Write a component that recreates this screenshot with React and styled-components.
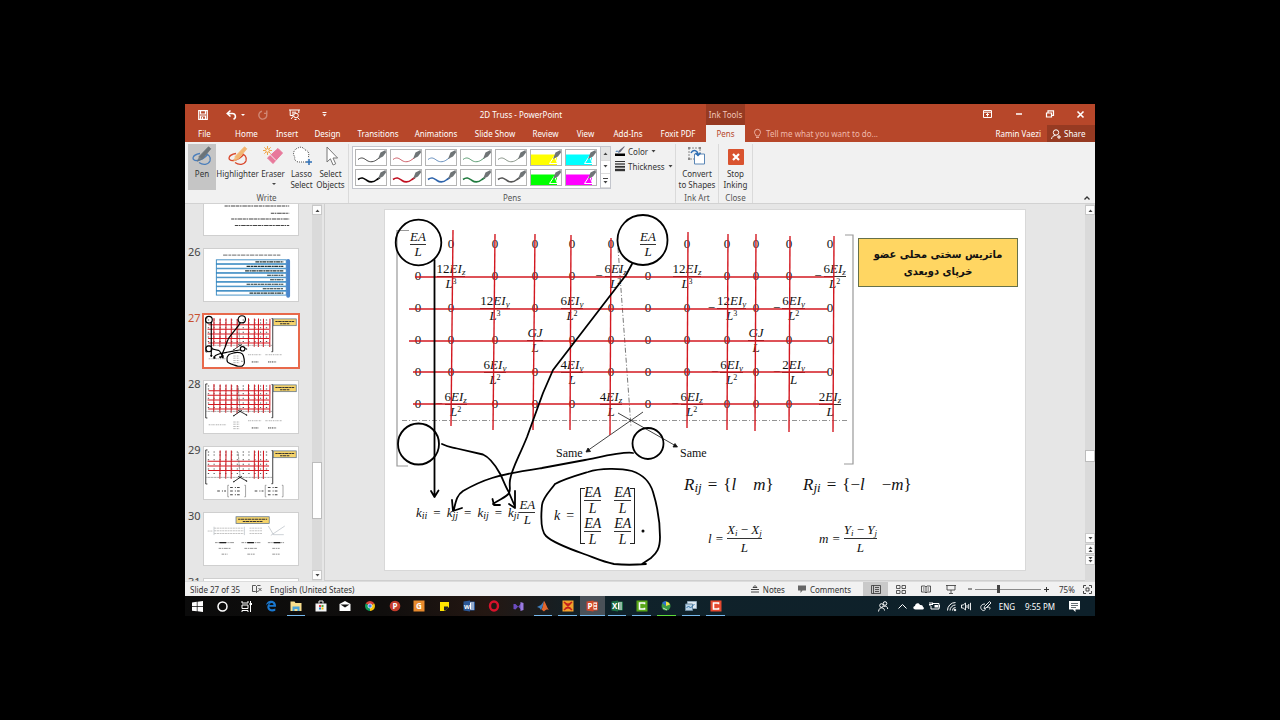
import React from 'react';
import styled, { createGlobalStyle } from 'styled-components';

const GlobalStyle = createGlobalStyle`
    * {
        box-sizing: border-box;
    }

    body {
        margin: 0;
        background: #000;
        font-family: "Noto Sans", "Open Sans", sans-serif;
        font-size: 8px;
        color: #333;
    }

    button {
        border: 0;
        padding: 0;
        background: none;
        font: inherit;
        color: inherit;
    }

    svg {
        display: block;
        flex: none;
        overflow: visible;
    }
`;

const Page = styled.div`
    min-height: 100vh;
    padding: 104px 185px;
`;

const Window = styled.div`
    display: flex;
    flex-direction: column;
    background: #e6e6e6;
`;

/* Title bar and tabs */

const TitleBar = styled.header`
    display: flex;
    height: 21px;
    background: #b7472a;
    color: #fff;
`;

const QuickAccess = styled.div`
    display: flex;
    align-items: center;
    flex: 0 0 151px;
    padding-left: 8px;
`;

const QuickButton = styled.button`
    display: flex;
    align-items: center;
    justify-content: center;
    width: ${props => props.$width}px;
    height: 20px;
    opacity: ${props => props.$faded ? 0.35 : 1};
`;

const Title = styled.h1`
    flex: 0 0 370px;
    margin: 0;
    font-size: 8px;
    font-weight: 400;
    line-height: 22px;
    text-align: center;
`;

const ContextTitle = styled.div`
    flex: 0 0 39px;
    background: #963a22;
    color: #f3c5b8;
    line-height: 22px;
    text-align: center;
    white-space: nowrap;
`;

const WindowButtons = styled.div`
    display: flex;
    margin-left: auto;
`;

const TabBar = styled.nav`
    display: flex;
    height: 17px;
    background: #b7472a;
    color: #fff;
`;

const Tab = styled.button`
    width: ${props => props.$width}px;
    height: 17px;
    margin-left: ${props => props.$active ? 2 : 0}px;
    background: ${props => props.$active ? '#f1f1f1' : 'none'};
    color: ${props => props.$active ? '#b7472a' : 'inherit'};
    white-space: nowrap;
`;

const TellMe = styled.button`
    display: flex;
    align-items: center;
    gap: 5px;
    margin-left: 9px;
    color: #f0b9aa;
`;

const UserName = styled.span`
    margin-left: auto;
    margin-right: 6px;
    line-height: 17px;
`;

const ShareButton = styled.button`
    display: flex;
    align-items: center;
    gap: 3px;
    width: 48px;
    padding-left: 4px;
    background: #963a22;
    color: #fff;
`;

/* Ribbon */

const Ribbon = styled.section`
    display: flex;
    height: 62px;
    background: #f1f1f1;
    border-bottom: 1px solid #d2d2d2;
`;

const Group = styled.div`
    display: flex;
    flex-direction: column;
    justify-content: space-between;
    width: ${props => props.$width}px;
    margin: 2px 0 0;
    border-right: 1px solid #dadada;
`;

const GroupBody = styled.div`
    display: flex;
    padding-left: ${props => props.$inset}px;
`;

const GroupName = styled.div`
    line-height: 10px;
    text-align: center;
    color: #555;
`;

const ToolButton = styled.button`
    display: flex;
    flex-direction: column;
    align-items: center;
    width: ${props => props.$width}px;
    height: 46px;
    padding-top: 2px;
    background: ${props => props.$active ? '#c5c5c5' : 'none'};
    line-height: 11px;
    white-space: nowrap;
`;

const ToolLabel = styled.span`
    margin-top: 2px;
`;

const Gallery = styled.div`
    display: flex;
    height: 43px;
    margin-top: 2px;
    background: #fff;
    border: 1px solid #c3c5cc;
`;

const Swatches = styled.div`
    display: grid;
    grid-template-columns: repeat(7, 32px);
    gap: 3px;
    padding: 2px;
`;

const Swatch = styled.button`
    height: 17px;
    border: 1px solid #b4b4b4;
    background: #fff;
`;

const GalleryScroll = styled.div`
    display: grid;
    grid-template-rows: repeat(3, 1fr);
    width: 10px;
    margin-left: 1px;
    border-left: 1px solid #c3c5cc;
`;

const GalleryArrow = styled.button`
    display: flex;
    align-items: center;
    justify-content: center;
    border-bottom: 1px solid #dcdcdc;
    background: ${props => props.$dim ? '#e4e4e4' : '#fff'};
`;

const InkOptions = styled.div`
    display: flex;
    flex-direction: column;
    gap: 1px;
    padding-left: 4px;
`;

const OptionButton = styled.button`
    display: flex;
    align-items: center;
    gap: 3px;
    height: 14px;
    white-space: nowrap;
`;

const Collapse = styled.button`
    align-self: flex-end;
    margin: 0 5px 3px auto;
`;

/* Work area */

const Workspace = styled.main`
    display: flex;
    height: 377px;
`;

const Sidebar = styled.aside`
    display: flex;
    flex: 0 0 140px;
    border-right: 1px solid #cfcfcf;
    overflow: hidden;
`;

const ThumbList = styled.ol`
    flex: 1;
    display: flex;
    flex-direction: column;
    gap: 12px;
    margin: -22px 0 0;
    padding: 0;
    list-style: none;
`;

const ThumbItem = styled.li`
    display: flex;
    flex: none;
    gap: ${props => props.$selected ? 1 : 2}px;
    height: 54px;
    padding-left: 3px;
    color: ${props => props.$selected ? '#c8502f' : '#444'};
    font-size: 11px;
    line-height: 8px;
`;

const ThumbNumber = styled.span`
    width: 13px;
`;

const ThumbFrame = styled.button`
    width: ${props => props.$selected ? 98 : 96}px;
    height: ${props => props.$selected ? 56 : 54}px;
    margin-top: ${props => props.$selected ? -1 : 0}px;
    border: ${props => props.$selected ? '2px solid #e8694b' : '1px solid #cfcfcf'};
    background: #fff;

    svg {
        width: 100%;
        height: 100%;
        overflow: hidden;
    }
`;

const ScrollTrack = styled.div`
    display: flex;
    flex-direction: column;
    width: 10px;
    margin-right: ${props => props.$gap || 0}px;
    padding: 1px 0;
    background: #dadada;
`;

const ScrollButton = styled.button`
    display: flex;
    align-items: center;
    justify-content: center;
    height: 10px;
    margin-bottom: ${props => props.$space || 0}px;
    background: #fdfdfd;
    border: 1px solid #c8c8c8;
`;

const ScrollGap = styled.div`
    flex: ${props => props.$grow};
`;

const ScrollThumb = styled.div`
    height: ${props => props.$size}px;
    background: #fff;
    border: 1px solid #bcbcbc;
`;

const CanvasArea = styled.div`
    display: flex;
    flex: 1;
    justify-content: center;
    padding-top: 6px;
    border-bottom: 1px solid #cfcfcf;
`;

/* The slide is a free canvas, its parts are placed by coordinates */

const Slide = styled.article`
    position: relative;
    width: 640px;
    height: 360px;
    background: #fff;
    box-shadow: 0 0 0 1px #d8d8d8;
    color: #111;
    font-family: "Liberation Serif", serif;
    font-size: 12px;
    line-height: 14px;
`;

const Placed = styled.div`
    position: absolute;
    left: ${props => props.$x}px;
    top: ${props => props.$y}px;
    display: flex;
    align-items: center;
    font-size: ${props => props.$size || 12}px;
    line-height: ${props => props.$leading || 14}px;
    white-space: pre;
`;

const Ink = styled.svg`
    position: absolute;
    left: 0;
    top: 0;
    width: 640px;
    height: 360px;
`;

const Callout = styled.div`
    position: absolute;
    left: 473px;
    top: 28px;
    width: 160px;
    height: 49px;
    padding: 7px 12px;
    background: #ffd662;
    border: 1px solid #66714a;
    color: #111;
    font-family: "DejaVu Sans Condensed", "DejaVu Sans", sans-serif;
    font-size: 11px;
    font-weight: 700;
    line-height: 17px;
    text-align: center;
    white-space: nowrap;
`;

const Matrix = styled.div`
    position: absolute;
    left: 16px;
    top: 18px;
    display: grid;
    grid-template-columns: 34px 32px 56px 24px 50px 28px 46px 32px 48px 10px 56px 26px;
    grid-auto-rows: 32px;
    font-size: 13px;
`;

const Cell = styled.div`
    display: flex;
    align-items: center;
    justify-content: center;
    white-space: nowrap;
`;

const FracBox = styled.span`
    display: inline-flex;
    flex-direction: column;
    text-align: center;
`;

const Over = styled.span`
    border-bottom: 1px solid #333;
`;

const Minus = styled.span`
    margin-right: 2px;
`;

const Equals = styled.span`
    margin: 0 ${props => props.$space || 6}px;
`;

const Sub = styled.sub`
    font-size: ${props => props.$size || 9}px;
    line-height: 0;
    vertical-align: -2px;
`;

const Sup = styled.sup`
    font-size: 8px;
    line-height: 0;
    vertical-align: 4px;
`;

const Bracketed = styled.div`
    display: grid;
    grid-template-columns: 17px 17px;
    column-gap: 13px;
    padding: 0 4px;
    line-height: 15px;
    position: relative;

    &::before,
    &::after {
        content: '';
        position: absolute;
        top: 3px;
        bottom: 3px;
        width: 4px;
        border: 1px solid #222;
    }

    &::before {
        left: 0;
        border-right: 0;
    }

    &::after {
        right: 0;
        border-left: 0;
    }
`;

/* Status bar */

const StatusBar = styled.footer`
    display: flex;
    align-items: center;
    height: 15px;
    padding-left: 5px;
    background: #f1f1f1;
    border-top: 1px solid #dcdcdc;
`;

const StatusItem = styled.button`
    display: flex;
    align-items: center;
    gap: 4px;
    margin-right: ${props => props.$space}px;
    white-space: nowrap;
`;

const StatusRight = styled.div`
    display: flex;
    align-items: center;
    margin-left: auto;
`;

const ViewButton = styled.button`
    display: flex;
    align-items: center;
    justify-content: center;
    width: ${props => props.$width || 25}px;
    height: 14px;
    background: ${props => props.$active ? '#c9c9c9' : 'none'};
`;

const Zoom = styled.div`
    display: flex;
    align-items: center;
    margin-left: 5px;
`;

const ZoomRange = styled.input`
    appearance: none;
    width: 66px;
    height: 9px;
    margin: 0 3px;
    background: linear-gradient(#8a8a8a, #8a8a8a) center / 100% 1px no-repeat;

    &::-webkit-slider-thumb {
        appearance: none;
        width: 3px;
        height: 8px;
        background: #444;
    }
`;

const ZoomValue = styled.span`
    width: 30px;
    padding-left: 10px;
`;

/* Taskbar */

const Taskbar = styled.nav`
    display: flex;
    height: 20px;
    background: linear-gradient(to right, #0b0b0b 0%, #100e0d 22%, #241712 33%, #10222a 45%, #0d202a 100%);
    color: #fff;
`;

const Apps = styled.div`
    display: grid;
    grid-template-columns: repeat(22, 1fr);
    flex: 0 0 543px;
`;

const AppButton = styled.button`
    display: flex;
    align-items: center;
    justify-content: center;
    margin: 0 ${props => props.$active ? 0 : 3}px;
    border-top: 1px solid transparent;
    border-bottom: 1px solid ${props => props.$line || 'transparent'};
    background: ${props => props.$active ? '#4a5158' : 'none'};
`;

const Tray = styled.div`
    display: flex;
    align-items: center;
    margin-left: auto;
    padding-right: 9px;
`;

const TrayButton = styled.button`
    display: flex;
    justify-content: center;
    width: ${props => props.$width}px;
    white-space: nowrap;
`;

const Svg = ({ w = 12, h = w, children }) => (
    <svg width={w} height={h} viewBox={`0 0 ${w} ${h}`} fill="none" stroke="currentColor" aria-hidden="true">
        {children}
    </svg>
);

const Arrow = ({ up, double }) => (
    <Svg w={5} h={double ? 6 : 3}>
        <g fill="#444" stroke="none" transform={up ? `rotate(180 2.5 ${double ? 3 : 1.5})` : undefined}>
            <path d="M0.5 0h4L2.5 2.5z" />
            {double && <path d="M0.5 3h4L2.5 5.5z" />}
        </g>
    </Svg>
);

const quickItems = [
    ['Save', 20, <Svg w={10}><path d="M0.7 0.7h8.6v8.6H0.7zM2.5 1v3h5V1M2.5 9V6h5v3M4.5 7v2" strokeWidth="1.2" /></Svg>],
    ['Undo', 44, <>
        <Svg w={11} h={10}><path d="M4.5 0.5L1.2 3.5l3.3 3M1.5 3.5h5a3 3 0 0 1 1 5.8" strokeWidth="1.5" /></Svg>
        <Svg w={8} h={2}><path d="M4 0h4L6 2z" fill="#fff" stroke="none" /></Svg>
    </>],
    ['Redo', 12, <Svg w={10}><path d="M8.2 3A4 4 0 1 1 4 1.2M8.8 0.4v3H6" strokeWidth="1.4" /></Svg>],
    ['Start slide show', 50, <Svg w={11}><path d="M0 1h11M1.2 1v5.5h3M9.8 1v3M3 3.2h4M3 5h2M2 10l2.5-3M7.5 10.5H5.5" /><circle cx="7" cy="6.5" r="2.3" /><path d="M8.5 8.5l2 2" /></Svg>],
    ['Customize', 10, <Svg w={5} h={5}><path d="M0.5 0.5h4" /><path d="M0.5 2.3h4L2.5 4.5z" fill="#fff" stroke="none" /></Svg>],
];

const tabs = [
    ['File', 39], ['Home', 45], ['Insert', 36], ['Design', 45], ['Transitions', 56], ['Animations', 60], ['Slide Show', 58],
    ['Review', 43], ['View', 37], ['Add-Ins', 48], ['Foxit PDF', 52],
];

const PenIcon = ({ ink, body }) => (
    <Svg w={20}>
        <path d="M8 7.5C-1 9 -0.5 15 5 14.5c5-.5 9-4 11-6.5M7 16.5c4 3 9 2.5 11-1.5 1.5-4-2-7-5-7.5" stroke={ink} strokeWidth="1.3" />
        <path d="M16.5 0.8l2.3 2-8.6 10.5-3.3-2.6z" fill={body} stroke={body} strokeLinejoin="round" strokeWidth="0.8" />
        <path d="M6.9 10.7l3.3 2.6-5.2 2.6z" fill={body} stroke="none" opacity="0.85" />
    </Svg>
);

const tools = [
    ['Pen', '', 28, <PenIcon ink="#4a7ebb" body="#6b7378" />, true],
    ['Highlighter', '', 43, <PenIcon ink="#d9472b" body="#f2b672" />],
    ['Eraser', '', 28, <Svg w={20}>
        <path d="M15 2.5l4.5 4.5L10 17.5 4.5 12z" fill="#e8799b" stroke="#e8799b" strokeLinejoin="round" />
        <path d="M7.5 9l5.5 5.5" stroke="#f1f1f1" />
        <path d="M4.5 0v9M0 4.5h9M1.3 1.3l6.4 6.4M7.7 1.3L1.3 7.7" stroke="#f0a74d" />
        <circle cx="4.5" cy="4.5" r="1.8" fill="#fff6e6" stroke="#f0a74d" />
    </Svg>],
    ['Lasso', 'Select', 29, <Svg w={20}>
        <path d="M14 16H6c-3-1-4-3-3-5C0 8 2 3 6 2c3-2 6 0 7 2 3 0 5 4 3 8" fill="#fff" stroke="#555" strokeDasharray="1 1" />
        <path d="M17 13v6M14 16h6" stroke="#2f6fb5" strokeWidth="1.5" />
    </Svg>],
    ['Select', 'Objects', 29, <Svg w={20}>
        <path d="M6 1v15l3.4-3.2 2.7 6.2 2.6-1.2-2.7-5.8h4.6z" fill="#fff" stroke="#777" />
    </Svg>],
];

const pens = [
    ['#333', 1], ['#c8505a', 1], ['#5a86b8', 1], ['#4f9468', 1], ['#7d8a7d', 1], ['#ffff00', 0], ['#00ffff', 0],
    ['#000', 2], ['#c00d1e', 2], ['#2b62ab', 2], ['#1f7a3d', 2], ['#555', 2], ['#00ff00', 0], ['#ff00ff', 0],
];

const PenSwatch = ({ color, weight }) => (
    <Svg w={30} h={15}>
        {weight
            ? <path d="M2 9.5c4-3 6-1 9 1s7 1.5 10-1l3-2" stroke={color} strokeWidth={weight === 2 ? 1.6 : 0.9} />
            : <path d="M0 4.5h24l2 4v6.5H0z" fill={color} stroke="none" />}
        {!weight && <path d="M23.5 6l-5 7.5h8z" stroke="#fff" />}
        <path d="M29.5 0l-5 2.5-2.5 6.5 5-2.5 3-4z" fill="#6f7476" stroke="none" />
    </Svg>
);

const cols = [[68, 20, 66, 216], [110, 24, 108, 220], [150, 24, 148, 220], [186, 25, 185, 220], [226, 28, 225, 225],
    [303, 22, 302, 218], [343, 24, 342, 220], [371, 24, 370, 221], [405, 26, 404, 222], [449, 26, 448, 222]];
const rows = [[30, 67, 448, 67], [24, 99, 443, 99], [24, 131, 443, 131], [28, 162, 443, 162], [28, 194, 448, 194]];

const Strikes = ({ only, width = 1.4 }) => (
    <g stroke="#d31820" strokeWidth={width} fill="none">
        {cols.filter((c, i) => !only || only.cols.includes(i)).map(([a, b, c, d]) => <path key={a} d={`M${a} ${b}L${c} ${d}`} />)}
        {rows.filter((r, i) => !only || only.rows.includes(i)).map(([a, b, c, d]) => <path key={b} d={`M${a} ${b}L${c} ${d}`} />)}
    </g>
);

const Brackets = ({ width = 1.2, color = '#999' }) => (
    <g stroke={color} strokeWidth={width} fill="none">
        <path d="M24 20.5H12V256h11M460 25h8v229h-9" />
    </g>
);

const Guides = ({ width = 0.8 }) => (
    <g stroke="#555" strokeWidth={width} fill="none">
        <path d="M17 210.5H463" stroke="#777" strokeDasharray="5 2 1 2" />
        <path d="M233 38L246 217" strokeDasharray="5 2 1 2" />
        <g stroke="#111">
            <path d="M258 202L202 241M233 203L291 236" />
            <path d="M201 242l2-4 2.5 3.5zM292.5 237l-4.5 0 2-3.5z" fill="#111" />
        </g>
    </g>
);

const Handwriting = ({ width = 1.8 }) => (
    <g stroke="#000" strokeWidth={width} fill="none" strokeLinecap="round" strokeLinejoin="round">
        <circle cx="33.5" cy="32.5" r="22.8" />
        <path d="M258 5c14 0 24.5 11 24.5 25S272 55 258 55s-25-10-25.5-24S243 5 258 5z" />
        <circle cx="33.5" cy="234" r="20.5" />
        <circle cx="263" cy="233.5" r="15.5" />
        <path d="M49.5 50V286M46 281l3.5 6 4-6.5" />
        <path d="M247 54L241 65 168 160 158 183 142 227C134 247 127 258 125 270c-1 7 1 9-1 13s-9 6-16 11M107.5 289l1.5 6 6 0" />
        <path d="M57 234c6 3 9 3 15 4.5l26 6c9 4 14 14 17.5 20 2 4 5 12 8 17l6 14M130 281v17l-6-4" />
        <path d="M248 243c-8-2-28 3-48 7l-43 8c-20 3-34 5-50 10-13 4-22 9-29 13-6 4-7 10-9 18M67 290l1 11 9-3" />
        <path d="M170 274c9-5 23-9 33-12 12-4 32-4 44-1 12 4 18 11 21 21 4 13 7 30 7 45 0 14-5 17-9 21l-9 6M261 354c-12 1-22 1-32 0-11-2-19-6-30-10-14-5-31-11-38-18-6-6-5-21-4-31 1-8 8-14 13-21" />
        <circle cx="258" cy="321" r="0.6" />
    </g>
);

const Scribble = ({ y, lines, x = 200, step = 40 }) => (
    <g stroke="#555" strokeWidth="6" strokeDasharray="18 5 9 4 26 5">
        {lines.map((len, i) => <path key={i} d={`M${x - len / 2} ${y + i * step}h${len}`} opacity="0.7" />)}
    </g>
);

const Note = ({ x = 472, y = 27, w = 156, h = 47 }) => (
    <g>
        <rect x={x} y={y} width={w} height={h} fill="#f5d36a" stroke="#59708c" strokeWidth="5" />
        <path d={`M${x + 14} ${y + 18}h${w - 28}M${x + 46} ${y + 33}h${w - 92}`} stroke="#333" strokeWidth="7" strokeDasharray="16 3 24 4" />
    </g>
);

const MiniFormulas = () => (
    <g stroke="#777" strokeWidth="4" strokeDasharray="10 4 6 5">
        <path d="M32 303h118M300 275h90M418 275h110M200 284h40M200 299h40M200 315h40M200 330h40" />
        <path d="M325 325h50M436 325h55" stroke="#222" strokeWidth="6" />
    </g>
);

const MiniDigits = () => (
    <g stroke="#555" strokeWidth="7" strokeDasharray="9 30 8 32">
        {[34, 56, 88, 120, 152, 184].map(y => <path key={y} d={`M26 ${y}H450`} />)}
    </g>
);

const thumbs = [
    [25, <g stroke="#444" strokeWidth="7" strokeDasharray="22 4 12 5 31 4">
        <path d="M140 160H580M455 210H580M185 250H580M210 295H580" />
    </g>],
    [26, <>
        <path d="M130 42H520" stroke="#888" strokeWidth="8" strokeDasharray="30 6 20 5" />
        {[350, 290, 280, 430, 450, 290, 400, 310].map((start, i) => (
            <g key={i}>
                <rect x="84" y={75 + i * 31} width="476" height="27" fill="#fff" stroke="#2f84bf" strokeWidth="6" />
                <path d={`M${start} ${89 + i * 31}H540`} stroke="#233" strokeWidth="8" strokeDasharray="26 4 14 3" />
            </g>
        ))}
        <rect x="560" y="70" width="26" height="268" rx="12" fill="#4a86cc" />
    </>],
    [27, <><MiniDigits /><Brackets width={6} color="#222" /><Strikes width={7} /><Guides width={5} /><Handwriting width={8} /><Note /><MiniFormulas /></>, true],
    [28, <><MiniDigits /><Brackets width={6} color="#222" /><Strikes width={7} /><Guides width={6} /><Note /><MiniFormulas /></>],
    [29, <>
        <MiniDigits /><Brackets width={6} color="#222" /><Strikes width={7} only={{ cols: [1, 2, 3, 6, 7, 8], rows: [1, 2, 3] }} /><Guides width={6} /><Note />
        <path d="M90 305h60M345 305h60M178 280h70M178 305h70M178 330h70M435 280h70M435 305h70M435 330h70" stroke="#444" strokeWidth="7" strokeDasharray="18 14 7 8" />
        <path d="M170 265h-8v80h8M275 265h8v80h-8M425 265h-8v80h8M530 265h8v80h-8" fill="none" stroke="#666" strokeWidth="4" />
    </>],
    [30, <>
        <Note x={218} y={26} w={226} />
        <g fill="none" stroke="#999" strokeWidth="4" strokeDasharray="14 4">
            <path d="M25 125h35M70 105h200M70 123h200M70 142h200M310 105h85M310 123h85M310 142h85" />
        </g>
        <path d="M68 95v58M275 95v58M438 90l35 60h70M455 155L550 90" fill="none" stroke="#8a94a0" strokeWidth="3" />
        <Scribble y={205} x={140} lines={[130, 80, 40]} />
        <Scribble y={205} x={320} lines={[130, 90, 50]} />
        <Scribble y={205} x={490} lines={[110, 50, 50]} />
        <path d="M105 205h45M295 205h45M475 205h45" stroke="#222" strokeWidth="8" />
    </>],
    [31, null],
];

const Frac = ({ top, bottom }) => (
    <FracBox>
        <Over>{top}</Over>
        <span>{bottom}</span>
    </FracBox>
);

// Entries are written as [sign][factor][symbols][axis]/[power of L], e.g. "-12EIz/3"
function Entry ({ value }) {
    if (value === '0') return <Cell>0</Cell>;
    const [, sign, factor, symbols, axis, power] = value.match(/^(-?)(\d*)([A-Z]+)([yz]?)\/(\d)$/);
    return (
        <Cell>
            {sign && <Minus>−</Minus>}
            <Frac
                top={<>{factor}<i>{symbols}</i>{axis && <Sub><i>{axis}</i></Sub>}</>}
                bottom={<><i>L</i>{power !== '1' && <Sup>{power}</Sup>}</>}
            />
        </Cell>
    );
}

const entries = [
    'EA/1 0 0 0 0 0 EA/1 0 0 0 0 0',
    '0 12EIz/3 0 0 0 -6EIz/2 0 12EIz/3 0 0 0 -6EIz/2',
    '0 0 12EIy/3 0 6EIy/2 0 0 0 -12EIy/3 0 -6EIy/2 0',
    '0 0 0 GJ/1 0 0 0 0 0 GJ/1 0 0',
    '0 0 6EIy/2 0 4EIy/1 0 0 0 -6EIy/2 0 -2EIy/1 0',
    '0 -6EIz/2 0 0 0 4EIz/1 0 -6EIz/2 0 0 0 2EIz/1',
].join(' ').split(' ');

const EAoverL = () => <Frac top={<i>EA</i>} bottom={<i>L</i>} />;
const K = ({ sub }) => <span><i>k</i><Sub $size={10}><i>{sub}</i></Sub></span>;

function MainSlide () {
    return (
        <Slide>
            <Matrix>
                {entries.map((value, i) => <Entry key={i} value={value} />)}
            </Matrix>
            <Callout dir="rtl" lang="fa">ماتریس سختی محلی عضو<br />خرپای دوبعدی</Callout>
            <Placed $x={171} $y={236}>Same</Placed>
            <Placed $x={295} $y={236}>Same</Placed>
            <Placed $x={31} $y={288} $size={13}>
                <K sub="ii" /><Equals>=</Equals><K sub="jj" /><Equals>=</Equals><K sub="ij" /><Equals>=</Equals><K sub="ji" />{' '}<EAoverL />
            </Placed>
            <Placed $x={169} $y={275} $size={14}>
                <i>k</i><Equals>=</Equals>
                <Bracketed><EAoverL /><EAoverL /><EAoverL /><EAoverL /></Bracketed>
            </Placed>
            <Placed $x={299} $y={268} $size={17}>
                <span><i>R</i><Sub $size={13}><i>ij</i></Sub><Equals>=</Equals>{'{'}<i>l</i>{'    '}<i>m</i>{'}'}</span>
            </Placed>
            <Placed $x={418} $y={268} $size={17}>
                <span><i>R</i><Sub $size={13}><i>ji</i></Sub><Equals>=</Equals>{'{'}−<i>l</i>{'    '}−<i>m</i>{'}'}</span>
            </Placed>
            <Placed $x={323} $y={311} $size={13} $leading={17}>
                <i>l</i><Equals $space={4}>=</Equals><Frac top={<><i>X</i><Sub><i>i</i></Sub> − <i>X</i><Sub><i>j</i></Sub></>} bottom={<i>L</i>} />
            </Placed>
            <Placed $x={434} $y={311} $size={13} $leading={17}>
                <i>m</i><Equals $space={4}>=</Equals><Frac top={<><i>Y</i><Sub><i>i</i></Sub> − <i>Y</i><Sub><i>j</i></Sub></>} bottom={<i>L</i>} />
            </Placed>
            <Ink viewBox="0 0 640 360" aria-hidden="true">
                <Brackets />
                <Guides />
                <Strikes />
                <Handwriting />
            </Ink>
        </Slide>
    );
}

const Tile = ({ fill, children }) => (
    <Svg w={12}><rect x="0.5" y="0.5" width="11" height="11" fill={fill} stroke="none" />{children}</Svg>
);

const Letter = ({ children, x = 6, size = 8 }) => (
    <text x={x} y="9" fill="#fff" stroke="none" fontSize={size} fontWeight="700" textAnchor="middle">{children}</text>
);

const BLUE = '#76b9ed';
const apps = [
    ['Start', <Svg w={11}><path d="M0 1.5l4.8-.7v4.4H0zM5.5.7L11 0v5.2H5.5zM0 6h4.8v4.3L0 9.7zM5.5 6H11v5l-5.5-.7z" fill="#fff" stroke="none" /></Svg>],
    ['Cortana', <Svg w={11}><circle cx="5.5" cy="5.5" r="4.5" strokeWidth="1.5" /></Svg>],
    ['Task View', <Svg w={11}><path d="M1 0v2h6V0M1 4h6v3.5H1zM1 11V9.5h6V11M9.5 0v11" /><path d="M8.5 3h2.5" strokeWidth="2" /></Svg>],
    ['Edge', <Svg w={12}><path d="M1 5.5C1.5 2 4 .8 6.3.8c3 0 4.9 2.2 4.7 5.9H4.3c.2 2.7 3.5 3.2 6 1.8v2.3c-3 1.4-7.5.6-8-3.3C2.2 5.5 3.3 4 4.8 3.3 3 3.4 1.8 4.3 1 5.5zM4.5 5h4c0-1.6-1-2-2-2s-2 .7-2 2z" fill="#1a78d0" stroke="none" fillRule="evenodd" /></Svg>],
    ['File Explorer', <Svg w={12}><path d="M.5 1.5h4l1 1.5h6v8H.5z" fill="#f7dd8c" stroke="none" /><path d="M2.5 11V6.5h7V11h-2V9h-3v2z" fill="#4aa3d8" stroke="none" /></Svg>, BLUE],
    ['Store', <Svg w={12}><path d="M.5 3.5h11v8H.5z" fill="#f4f4f4" stroke="none" /><path d="M4 3.5V1h4v2.5" stroke="#eee" /><path d="M4 5h2v2H4z" fill="#e34" stroke="none" /><path d="M6.5 5h2v2h-2z" fill="#5a3" stroke="none" /><path d="M4 7.5h2v2H4z" fill="#28c" stroke="none" /><path d="M6.5 7.5h2v2h-2z" fill="#fb0" stroke="none" /></Svg>],
    ['Mail', <Svg w={12}><path d="M.5 4L6 1l5.5 3v7H.5z" fill="#fff" stroke="none" /><path d="M1.5 4.5h9L6 7.5z" fill="#111" stroke="none" /></Svg>],
    ['Chrome', <Svg w={10}><path d="M5 5L.7 2.5a5 5 0 0 1 8.6 0z" fill="#db4437" stroke="none" /><path d="M5 5L.7 2.5A5 5 0 0 0 5 10z" fill="#0f9d58" stroke="none" /><path d="M5 5l4.3-2.5A5 5 0 0 1 5 10z" fill="#f4c20d" stroke="none" /><circle cx="5" cy="5" r="2.1" fill="#4285f4" stroke="#fff" strokeWidth="0.7" /></Svg>],
    ['Psiphon', <Svg w={12}><circle cx="6" cy="6" r="5.3" fill="#c43c2c" stroke="none" /><Letter>P</Letter></Svg>],
    ['GOM', <Tile fill="#e88a2d"><Letter>G</Letter></Tile>],
    ['Sticky Notes', <Svg w={9}><path d="M0 0h9v5L5 9H0z" fill="#ffe400" stroke="none" /><path d="M4 4.5h4v1.8L5.5 8.5H4z" fill="#222" stroke="none" /></Svg>],
    ['Word', <Svg w={12}><path d="M6 2h5.5v8H6z" fill="#fff" stroke="#2b5797" /><path d="M8 4h3M8 6h3M8 8h3" stroke="#2b5797" /><path d="M.5 1.5L7 .5v11l-6.5-1z" fill="#2b5797" stroke="none" /><Letter x={3.8} size={6}>W</Letter></Svg>],
    ['Opera', <Svg w={12}><ellipse cx="6" cy="6" rx="4" ry="4.5" stroke="#d8122b" strokeWidth="2.4" /></Svg>],
    ['Visual Studio', <Svg w={11}><path d="M0.5 3v5l2 .5L8 2.5v6L2.5 3z" fill="#6c4cc0" stroke="none" /><path d="M7.5 1L10.5 2v7l-3 1z" fill="#9a7be0" stroke="none" /></Svg>],
    ['MATLAB', <Svg w={12}><path d="M0 7l4-2 3-4-1.5 6L4 10 2.5 8z" fill="#3f7fc0" stroke="none" /><path d="M7 1c1.5 1 2.5 6 5 9-2-1-3-.5-5 1.5L4.5 9.5C6 8 6 4 7 1z" fill="#e2672d" stroke="none" /></Svg>, BLUE],
    ['XAMPP', <Tile fill="#f1a22c"><path d="M2 2c3 3 5 3 8 0M2 10c3-3 5-3 8 0M3 3l6 6M9 3L3 9" stroke="#c3201c" strokeWidth="1.5" /></Tile>, BLUE],
    ['PowerPoint', <Svg w={12}><path d="M6 2h5.5v8H6z" fill="#fff" stroke="#d04a2c" /><path d="M8 4.5h2.5M8 7.5h2.5" stroke="#d04a2c" strokeWidth="1.5" /><path d="M.5 1.5L7.5 .5v11l-7-1z" fill="#d04a2c" stroke="none" /><Letter x={4}>P</Letter></Svg>, BLUE, true],
    ['Excel', <Svg w={12}><path d="M6 2h5.5v8H6z" fill="#fff" stroke="#1e7145" /><path d="M8 4h3M8 6h3M8 8h3" stroke="#1e7145" /><path d="M.5 1.5L7 .5v11l-6.5-1z" fill="#1e7145" stroke="none" /><Letter x={3.8}>X</Letter></Svg>, BLUE],
    ['Camtasia', <Tile fill="#58a618"><path d="M8.5 4.2V3h-5v6h5V7.8" stroke="#fff" strokeWidth="1.6" /></Tile>, BLUE],
    ['Download Manager', <Svg w={12}><circle cx="6" cy="6" r="4.5" fill="#3a9b45" stroke="none" /><path d="M2 3a5 5 0 0 1 4-2v5z" fill="#2d6fd2" stroke="none" /><path d="M6 1.5a5 5 0 0 1 4 3L6 6z" fill="#f3e24b" stroke="none" /><path d="M3 8l4 2" stroke="#c8e8c0" /></Svg>, '#5fdc3c'],
    ['Task Manager', <Svg w={12}><path d="M2.5 1.5h9v7h-9z" fill="#dfeaf2" stroke="#92a9ba" /><path d="M.5 4h7v6.5h-7z" fill="#bcd4e6" stroke="#6c8aa0" /><path d="M1.5 8l2-2 2 2 4-4" stroke="#3172a8" /></Svg>, BLUE],
    ['Recorder', <Tile fill="#e5492f"><path d="M8.5 4.2V3h-5v6h5V7.8" stroke="#fff" strokeWidth="1.6" /></Tile>, BLUE],
];

const tray = [
    ['People', 20, <Svg w={10} h={11}><circle cx="3.5" cy="4.5" r="1.8" /><circle cx="7" cy="2.5" r="1.8" /><path d="M.5 10.5C1 7.5 2.5 6.5 4 6.8s2.3 1 2.5 2.7M5.5 5.5C8 4.5 9.5 5.5 9.7 8" /></Svg>],
    ['Hidden icons', 18, <Svg w={9} h={5}><path d="M.5 4.5l4-4 4 4" /></Svg>],
    ['OneDrive', 14, <Svg w={11} h={8}><path d="M2.5 7.5C0 7.5-.5 4.5 2 4c0-3 4-4 5-1 2.5-.5 3 1 3 2 1.5.5 1 2.5-.5 2.5z" fill="#fff" stroke="none" /></Svg>],
    ['Battery', 18, <Svg w={11} h={8}><path d="M3 1.5h7v5.5H2V4M10.5 3v2.5" /><path d="M5.5 3H9v2.5H5.5z" fill="#fff" stroke="none" /><path d="M0 2.5h4M1 0v4M3 0v3" /></Svg>],
    ['Network', 16, <Svg w={9}><path d="M.5 8.5a8 8 0 0 1 8-8M3 8.5A5.5 5.5 0 0 1 8.5 3M5.5 8.5a3 3 0 0 1 3-3" /><circle cx="8" cy="8" r="0.8" fill="#fff" /></Svg>],
    ['Volume', 15, <Svg w={11} h={9}><path d="M.5 3h1.7L4.5 1v7L2.2 6H.5zM6 3v3M7.7 2v5M9.5 .8v7.4" strokeWidth="0.9" /></Svg>],
    ['Ink workspace', 22, <Svg w={11} h={10}><path d="M9.5.5L11 2 6 7 4 7.5 4.5 5.5zM5 3C2 3 0 5 1 7.5s4 3 4.5 0M7 6.5c3-1.5 4 1 2 2" strokeWidth="0.9" /></Svg>],
];

function App () {
    return (
        <>
            <GlobalStyle />
            <Page>
                <Window>
                    <TitleBar>
                        <QuickAccess>
                            {quickItems.map(([name, width, icon]) => (
                                <QuickButton key={name} $width={width} $faded={name === 'Redo'} aria-label={name}>{icon}</QuickButton>
                            ))}
                        </QuickAccess>
                        <Title>2D Truss - PowerPoint</Title>
                        <ContextTitle>Ink Tools</ContextTitle>
                        <WindowButtons>
                            <QuickButton $width={31} aria-label="Ribbon display options"><Svg w={9} h={8}><path d="M.5.5h8v7h-8zM.5 2.2h8M4.5 6.5V3.5M3 5l1.5-1.5L6 5" /></Svg></QuickButton>
                            <QuickButton $width={31} aria-label="Minimize"><Svg w={6} h={2}><path d="M0 1h6" strokeWidth="1.5" /></Svg></QuickButton>
                            <QuickButton $width={31} aria-label="Restore"><Svg w={8}><path d="M.5 3h5v4h-5zM2 2.5V.8h5.5v4.5H6" strokeWidth="1.2" /></Svg></QuickButton>
                            <QuickButton $width={30} aria-label="Close"><Svg w={7}><path d="M.5.5l6 6M6.5.5l-6 6" strokeWidth="1.6" /></Svg></QuickButton>
                        </WindowButtons>
                    </TitleBar>
                    <TabBar>
                        {tabs.map(([name, width]) => <Tab key={name} $width={width}>{name}</Tab>)}
                        <Tab $width={39} $active>Pens</Tab>
                        <TellMe>
                            <Svg w={7} h={10}><path d="M2 7C2 5.5.5 5 .5 3.3a3 3 0 0 1 6 0C6.5 5 5 5.5 5 7zM2 8.5h3" strokeWidth="0.9" /></Svg>
                            Tell me what you want to do...
                        </TellMe>
                        <UserName>Ramin Vaezi</UserName>
                        <ShareButton>
                            <Svg w={10}><circle cx="5" cy="3.5" r="2.7" /><path d="M.5 10C1 7.5 2.5 6.5 4.5 6.5M8 6v4M6 8h4" /></Svg>
                            Share
                        </ShareButton>
                    </TabBar>
                    <Ribbon>
                        <Group $width={164}>
                            <GroupBody $inset={3}>
                                {tools.map(([first, second, width, icon, active]) => (
                                    <ToolButton key={first + second} $width={width} $active={active}>
                                        {icon}
                                        <ToolLabel>{first}{second && <><br />{second}</>}</ToolLabel>
                                        {first === 'Eraser' && <Svg w={5} h={8}><path d="M1 4h4L3 6z" fill="#444" stroke="none" /></Svg>}
                                    </ToolButton>
                                ))}
                            </GroupBody>
                            <GroupName>Write</GroupName>
                        </Group>
                        <Group $width={327}>
                            <GroupBody $inset={3}>
                                <Gallery>
                                    <Swatches>
                                        {pens.map(([color, weight], i) => (
                                            <Swatch key={i} aria-label={`Pen style ${i + 1}`}><PenSwatch color={color} weight={weight} /></Swatch>
                                        ))}
                                    </Swatches>
                                    <GalleryScroll>
                                        <GalleryArrow $dim aria-label="Previous pens"><Arrow up /></GalleryArrow>
                                        <GalleryArrow aria-label="Next pens"><Arrow /></GalleryArrow>
                                        <GalleryArrow aria-label="All pens"><Svg w={5} h={6}><path d="M0 .5h5" stroke="#444" /><path d="M.5 3h4l-2 2.5z" fill="#444" stroke="none" /></Svg></GalleryArrow>
                                    </GalleryScroll>
                                </Gallery>
                                <InkOptions>
                                    <OptionButton>
                                        <Svg w={10}><path d="M0 7.5h10V10H0z" fill="#000" stroke="none" /><path d="M9.5 0L4 4.5 3 6.5l2.5-.5 4-5z" fill="#667" stroke="none" /><path d="M1 6C1 4.5 3 5 4 6.5" stroke="#2f6fb5" /></Svg>
                                        Color <Arrow />
                                    </OptionButton>
                                    <OptionButton>
                                        <Svg w={10}><path d="M0 .5h10" /><path d="M0 3h10" strokeWidth="1.3" /><path d="M0 5.8h10" strokeWidth="1.8" /><path d="M0 9h10" strokeWidth="2.4" /></Svg>
                                        Thickness <Arrow />
                                    </OptionButton>
                                </InkOptions>
                            </GroupBody>
                            <GroupName>Pens</GroupName>
                        </Group>
                        <Group $width={43}>
                            <GroupBody $inset={0}>
                                <ToolButton $width={42}>
                                    <Svg w={20}>
                                        <path d="M2 2h11v11H2z" stroke="#888" strokeDasharray="2 1" />
                                        <path d="M1 1h2v2H1zM12 1h2v2h-2zM1 12h2v2H1z" fill="#888" stroke="none" />
                                        <path d="M7.5 8h10v10h-10z" fill="#fff" stroke="#5b86b5" />
                                        <path d="M4 7c2-4 7-3 7 2M8.5 7L11 9.5 13.5 7" stroke="#2f6fb5" strokeWidth="1.5" />
                                    </Svg>
                                    <ToolLabel>Convert<br />to Shapes</ToolLabel>
                                </ToolButton>
                            </GroupBody>
                            <GroupName>Ink Art</GroupName>
                        </Group>
                        <Group $width={34}>
                            <GroupBody $inset={0}>
                                <ToolButton $width={33}>
                                    <Svg w={20}><rect x="2" y="3" width="16" height="16" rx="1" fill="#d9532f" stroke="none" /><path d="M7 8l6 6M13 8l-6 6" stroke="#fff" strokeWidth="2.2" /></Svg>
                                    <ToolLabel>Stop<br />Inking</ToolLabel>
                                </ToolButton>
                            </GroupBody>
                            <GroupName>Close</GroupName>
                        </Group>
                        <Collapse aria-label="Collapse the ribbon"><Svg w={6} h={4}><path d="M.5 3.5L3 1l2.5 2.5" strokeWidth="1.3" /></Svg></Collapse>
                    </Ribbon>
                    <Workspace>
                        <Sidebar>
                            <ThumbList>
                                {thumbs.map(([number, art, selected]) => (
                                    <ThumbItem key={number} $selected={selected}>
                                        <ThumbNumber>{number > 25 && number}</ThumbNumber>
                                        <ThumbFrame $selected={selected} aria-label={`Slide ${number}`}>
                                            <svg viewBox="0 0 640 360" preserveAspectRatio="none" aria-hidden="true">{art}</svg>
                                        </ThumbFrame>
                                    </ThumbItem>
                                ))}
                            </ThumbList>
                            <ScrollTrack $gap={2}>
                                <ScrollButton aria-label="Scroll up"><Arrow up /></ScrollButton>
                                <ScrollGap $grow={247} />
                                <ScrollThumb $size={57} />
                                <ScrollGap $grow={51} />
                                <ScrollButton aria-label="Scroll down"><Arrow /></ScrollButton>
                            </ScrollTrack>
                        </Sidebar>
                        <CanvasArea>
                            <MainSlide />
                        </CanvasArea>
                        <ScrollTrack>
                            <ScrollButton aria-label="Scroll up"><Arrow up /></ScrollButton>
                            <ScrollGap $grow={234} />
                            <ScrollThumb $size={12} />
                            <ScrollGap $grow={71} />
                            <ScrollButton $space={1} aria-label="Scroll down"><Arrow /></ScrollButton>
                            <ScrollButton $space={1} aria-label="Previous slide"><Arrow up double /></ScrollButton>
                            <ScrollButton $space={15} aria-label="Next slide"><Arrow double /></ScrollButton>
                        </ScrollTrack>
                    </Workspace>
                    <StatusBar>
                        <StatusItem $space={12}>Slide 27 of 35</StatusItem>
                        <StatusItem $space={8} aria-label="Spelling"><Svg w={10} h={8}><path d="M.5.5h3l1 1v6l-1-1h-3zM4.5 1.5l1-1h3M4.5 7.5l1-1h1M6.5 3l3 3M9.5 3l-3 3" strokeWidth="0.8" /></Svg></StatusItem>
                        <StatusItem $space={0}>English (United States)</StatusItem>
                        <StatusRight>
                            <StatusItem $space={13}>
                                <Svg w={8}><path d="M4 .5l2 2H2zM0 4.5h8M0 7h8" strokeWidth="0.9" /></Svg>
                                Notes
                            </StatusItem>
                            <StatusItem $space={12}>
                                <Svg w={8}><path d="M0 .5h8v5H4.5L2.5 8V5.5H0z" fill="#666" stroke="none" /></Svg>
                                Comments
                            </StatusItem>
                            <ViewButton $active aria-label="Normal"><Svg w={10} h={9}><path d="M.5.5h9v8h-9zM2.5.5v8M4 2.5h4M4 4.5h4M4 6.5h4" strokeWidth="0.8" /></Svg></ViewButton>
                            <ViewButton aria-label="Slide sorter"><Svg w={10} h={9}><path d="M.5.5h3.5v3H.5zM6 .5h3.5v3H6zM.5 5.5h3.5v3H.5zM6 5.5h3.5v3H6z" strokeWidth="0.8" /></Svg></ViewButton>
                            <ViewButton aria-label="Reading view"><Svg w={10} h={9}><path d="M.5 1h3.5l1 1v6l-1-1H.5zM5 2l1-1h3.5v6H6L5 8M2 3h1.5M2 5h1.5M6.5 3H8M6.5 5H8" strokeWidth="0.8" /></Svg></ViewButton>
                            <ViewButton aria-label="Slide show"><Svg w={10} h={9}><path d="M0 .5h10M1 .5v4.5h8V.5M5 5v3M3 8.5h4" strokeWidth="0.8" /></Svg></ViewButton>
                            <Zoom>
                                <button aria-label="Zoom out"><Svg w={4}><path d="M0 2h4" /></Svg></button>
                                <ZoomRange type="range" min="10" max="220" defaultValue="84" aria-label="Zoom" />
                                <button aria-label="Zoom in"><Svg w={5}><path d="M0 2.5h5M2.5 0v5" /></Svg></button>
                                <ZoomValue>75%</ZoomValue>
                            </Zoom>
                            <ViewButton $width={16} aria-label="Fit slide to window"><Svg w={9}><path d="M.5 3V.5H3M6 .5h2.5V3M8.5 6v2.5H6M3 8.5H.5V6M3 3h3v3H3z" strokeWidth="0.9" /></Svg></ViewButton>
                        </StatusRight>
                    </StatusBar>
                    <Taskbar>
                        <Apps>
                            {apps.map(([name, icon, line, active]) => (
                                <AppButton key={name} $line={line} $active={active} aria-label={name}>{icon}</AppButton>
                            ))}
                        </Apps>
                        <Tray>
                            {tray.map(([name, width, icon]) => <TrayButton key={name} $width={width} aria-label={name}>{icon}</TrayButton>)}
                            <TrayButton $width={22}>ENG</TrayButton>
                            <TrayButton $width={44}>9:55 PM</TrayButton>
                            <TrayButton $width={24} aria-label="Notifications"><Svg w={11}><path d="M0 0h11v8.5H6.5V11L4 8.5H0z" fill="#fff" stroke="none" /><path d="M2 2.5h7M2 4.5h7M2 6.5h5" stroke="#25323a" strokeWidth="0.7" /></Svg></TrayButton>
                        </Tray>
                    </Taskbar>
                </Window>
            </Page>
        </>
    );
}

export default App;
